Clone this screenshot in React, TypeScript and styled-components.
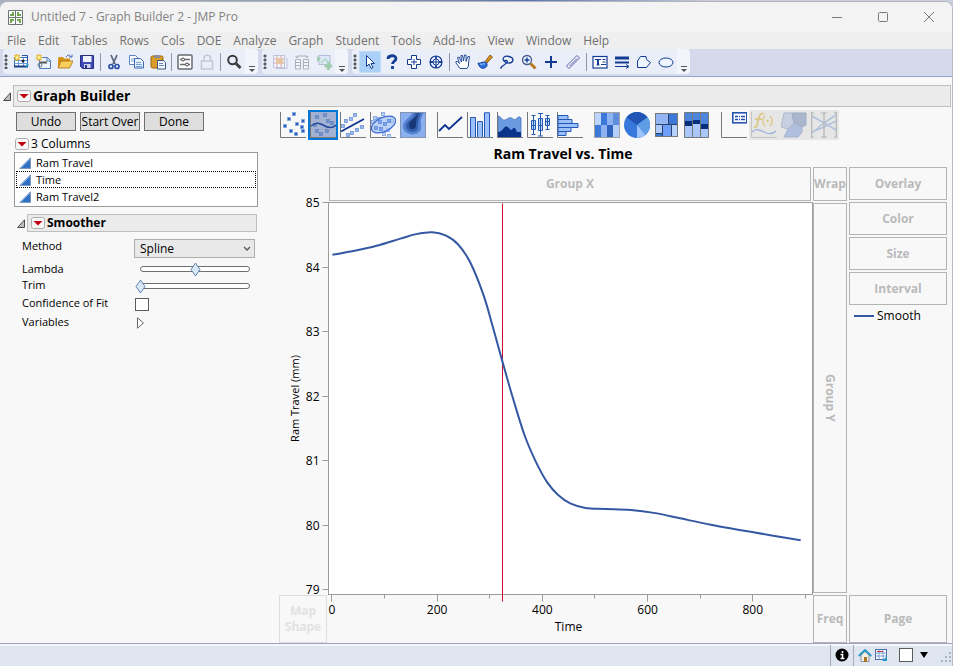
import React, { useLayoutEffect, useRef, useState } from "react";
import styled, { createGlobalStyle, css } from "styled-components";

const GlobalStyle = createGlobalStyle`
  * { box-sizing: border-box; }
  html, body { margin: 0; padding: 0; }
  body {
    background: #cdd3e4;
    color: #000;
    font: 12px/16px "Open Sans", "Noto Sans", sans-serif;
  }
  button, input, select { font: inherit; color: inherit; margin: 0; }
  svg { display: block; flex: none; }
`;

/* ---------- window frame ---------- */

const Page = styled.div`
  height: 100vh;
  min-height: 560px;
  display: flex;
  flex-direction: column;
  padding-top: 1px;
  background: linear-gradient(90deg, #aab2c4, #8d97b5 40%, #5873b4 55%, #c9cede 75%);
`;

const Window = styled.div`
  flex: 1;
  min-height: 0;
  display: flex;
  flex-direction: column;
  border-top: 1px solid #b4b4b6;
  border-right: 1px solid #b9bbc4;
  border-radius: 8px 8px 0 0;
  background: #f8f8f8;
  overflow: hidden;
`;

const TitleBar = styled.header`
  display: flex;
  align-items: center;
  gap: 8px;
  height: 30px;
  padding-left: 8px;
  background: #f3f3f3;
  color: #828282;
`;

const WindowTitle = styled.h1`
  flex: 1;
  margin: 0;
  font-size: 12px;
  font-weight: 400;
`;

const CaptionButtons = styled.div`
  display: flex;
`;

const CaptionButton = styled.button`
  display: grid;
  place-items: center;
  width: 46px;
  height: 28px;
  padding: 0;
  border: 0;
  background: none;
`;

const MenuBar = styled.nav`
  display: flex;
  gap: 12px;
  height: 17px;
  padding-left: 7px;
  background: #efefef;
`;

const MenuItem = styled.button`
  padding: 0;
  border: 0;
  background: none;
  color: #707070;
  line-height: 17px;
`;

/* ---------- toolbar ---------- */

const ToolStrip = styled.div`
  display: flex;
  gap: 4px;
  height: 28px;
  padding: 0 0 2px 3px;
  background: #d4d9ec;
  border-bottom: 1px solid #97a3ce;
`;

const ToolGroup = styled.div`
  display: flex;
  align-items: center;
  border-radius: 4px;
  background: #eaeef9;
`;

const Grip = styled.span`
  width: 7px;
  height: 15px;
  background: radial-gradient(circle at 3px 2px, #55585f 1px, transparent 2px) 0 0 / 7px 4px;
`;

const ToolButton = styled.button<{ $active?: boolean; $dim?: boolean }>`
  display: grid;
  place-items: center;
  width: 22px;
  height: 22px;
  padding: 0;
  border: 1px solid ${(p) => (p.$active ? "#c3dcf6" : "transparent")};
  background: ${(p) => (p.$active ? "#acd1f8" : "none")};
  & > svg { opacity: ${(p) => (p.$dim ? 0.4 : 1)}; }
`;

const ToolDivider = styled.span`
  width: 1px;
  height: 18px;
  margin: 0 2px;
  background: #8f95aa;
`;

const Overflow = styled.button`
  align-self: stretch;
  display: flex;
  align-items: flex-end;
  justify-content: center;
  width: 13px;
  padding: 0 0 2px;
  border: 0;
  border-radius: 0 4px 4px 0;
  background: #f3f5fc;
`;

/* ---------- outline headings ---------- */

const Outline = styled.div<{ $small?: boolean }>`
  display: flex;
  align-items: center;
  gap: 2px;
  padding: ${(p) => (p.$small ? "0 1px 0 3px" : "0 1px 0 3px")};
`;

const OutlineBar = styled.div<{ $small?: boolean }>`
  flex: 1;
  display: flex;
  align-items: center;
  gap: 2px;
  height: ${(p) => (p.$small ? "18px" : "22px")};
  padding-left: 3px;
  border: 1px solid #bebebe;
  background: #ebebeb;
`;

const OutlineTitle = styled.h2<{ $small?: boolean }>`
  margin: 0;
  font-size: ${(p) => (p.$small ? "12px" : "14px")};
  line-height: 16px;
  font-weight: 700;
`;

const PlainButton = styled.button`
  display: block;
  padding: 0;
  border: 0;
  background: none;
`;

/* ---------- body layout ---------- */

const Content = styled.main`
  flex: 1;
  min-height: 0;
  display: flex;
  flex-direction: column;
  padding-top: 8px;
`;

const Workspace = styled.div`
  flex: 1;
  min-height: 0;
  display: grid;
  grid-template-columns: 244px minmax(0, 1fr);
  gap: 20px;
  padding: 3px 5px 0 14px;
`;

const ControlPanel = styled.section`
  display: flex;
  flex-direction: column;
  padding-top: 2px;
`;

const ButtonRow = styled.div`
  display: flex;
  gap: 4px;
  padding-left: 2px;
`;

const PushButton = styled.button`
  width: 60px;
  height: 19px;
  padding: 0;
  border: 1px solid #707070;
  background: #dedede;
  line-height: 16px;
  white-space: nowrap;
`;

const ColumnsHeading = styled.div`
  display: flex;
  align-items: center;
  gap: 2px;
  height: 16px;
  margin: 5px 0 0 1px;
`;

const ColumnList = styled.ul`
  margin: 0 0 7px;
  padding: 1px;
  border: 1px solid #9a9a9a;
  background: #fff;
  font-size: 11px;
  list-style: none;
`;

const ColumnItem = styled.li<{ $focused?: boolean }>`
  display: flex;
  align-items: center;
  gap: 5px;
  height: 17px;
  padding-left: 2px;
  border: 1px dotted ${(p) => (p.$focused ? "#000" : "transparent")};
`;

const Form = styled.div`
  display: grid;
  grid-template-columns: 112px 121px;
  grid-template-rows: 23px 16px 18px 19px 18px;
  align-items: center;
  padding: 6px 0 0 8px;
`;

const Label = styled.label`
  align-self: start;
  font-size: 11px;
  line-height: 16px;
`;

const SelectBox = styled.div`
  display: grid;
  align-items: center;
  align-self: start;
  margin-top: 1px;
  & > * { grid-area: 1 / 1; }
  & > svg { justify-self: end; margin-right: 4px; pointer-events: none; }
`;

const Select = styled.select`
  appearance: none;
  width: 100%;
  height: 19px;
  padding: 0 5px;
  border: 1px solid #adadad;
  border-radius: 0;
  background: #e9e9e9;
  line-height: 16px;
`;

const SliderBox = styled.div`
  display: grid;
  align-items: center;
  width: 120px;
  margin-left: 1px;
  & > * { grid-area: 1 / 1; }
`;

const Rail = styled.span`
  height: 6px;
  margin: 0 5px;
  border: 1px solid #6e6e6e;
  border-radius: 3px;
  background: #fff;
`;

const thumb = css`
  appearance: none;
  width: 11px;
  height: 15px;
  border: 0;
  border-radius: 0;
  background: url("data:image/svg+xml,%3Csvg xmlns='http://www.w3.org/2000/svg' width='11' height='15'%3E%3Cpath d='M5.5 1 10 7.500 5.500 14 1 7.500Z' fill='%23d9e8f6' stroke='%236284ab'/%3E%3C/svg%3E") no-repeat;
`;

const Range = styled.input.attrs({ type: "range" })`
  appearance: none;
  width: 100%;
  height: 15px;
  background: none;
  &::-webkit-slider-thumb { ${thumb} }
  &::-moz-range-thumb { ${thumb} }
`;

const Checkbox = styled.input.attrs({ type: "checkbox" })`
  appearance: none;
  width: 14px;
  height: 13px;
  margin-left: 1px;
  border: 1px solid #5c5c5c;
  background: #fff;
  &:checked { background: #2c62b0; }
`;

/* ---------- graph area ---------- */

const GraphPanel = styled.section`
  display: flex;
  flex-direction: column;
  min-width: 0;
  min-height: 0;
`;

const ElementBar = styled.div`
  display: flex;
  gap: 7px;
`;

const ElementGroup = styled.div`
  display: flex;
`;

const DisabledElements = styled.div`
  display: flex;
  background: #e6e6e6;
`;

const ElementButton = styled.button<{ $selected?: boolean }>`
  display: grid;
  place-items: center;
  width: 30px;
  height: 30px;
  padding: 0;
  border: 2px solid ${(p) => (p.$selected ? "#0078d7" : "transparent")};
  background: ${(p) => (p.$selected ? "#a3b1d2" : "none")};
`;

const GraphGrid = styled.div`
  flex: 1;
  min-height: 0;
  display: grid;
  grid-template-columns: 48px minmax(0, 1fr) 34px 98px;
  grid-template-rows: 27px 34px minmax(0, 1fr) 48px;
  column-gap: 2px;
  padding-left: 1px;
`;

const GraphTitle = styled.h3`
  grid-area: 1 / 1 / 2 / 4;
  align-self: center;
  margin: 0;
  text-align: center;
  font-size: 14px;
  line-height: 20px;
  font-weight: 700;
`;

const DropZone = styled.div<{ $area?: string; $faint?: boolean; $vertical?: boolean; $inset?: boolean }>`
  grid-area: ${(p) => p.$area ?? "auto"};
  display: flex;
  align-items: center;
  justify-content: center;
  min-height: 33px;
  margin: ${(p) => (p.$inset ? "2px 0" : "0")};
  border: 1px solid ${(p) => (p.$faint ? "#dedede" : "#b4b4b4")};
  background: #f8f8f8;
  color: ${(p) => (p.$faint ? "#e2e2e2" : "#bababa")};
  font-weight: 700;
  text-align: center;
  writing-mode: ${(p) => (p.$vertical ? "vertical-rl" : "horizontal-tb")};
`;

const RoleColumn = styled.div`
  grid-area: 2 / 4 / 4 / 5;
  display: flex;
  flex-direction: column;
  gap: 2px;
`;

const LegendEntry = styled.div`
  display: flex;
  align-items: center;
  gap: 3px;
  padding: 1px 0 0 5px;
`;

const LegendSwatch = styled.span`
  width: 20px;
  height: 2px;
  background: #3558a2;
`;

const ChartSvg = styled.svg`
  grid-area: 3 / 1 / 5 / 3;
  width: 100%;
  height: calc(100% - 2px);
  margin-top: 2px;
  overflow: visible;
  font-size: 12px;
`;

const AxisTitle = styled.text`
  font-size: 11px;
`;

/* ---------- status bar ---------- */

const StatusBar = styled.footer`
  display: flex;
  justify-content: flex-end;
  align-items: center;
  height: 23px;
  border-top: 1px solid #97a3ce;
  box-shadow: inset 0 2px #f4f6fb;
  background: #e0e6f0;
`;

const StatusCell = styled.div`
  display: flex;
  align-items: center;
  gap: 3px;
  height: 21px;
  padding: 0 4px;
  border-left: 1px solid #a4aabb;
`;

const StatusCheck = styled(Checkbox)`
  height: 14px;
  margin: 0 4px 0 9px;
`;

/* ---------- small glyphs ---------- */

const Disclosure = () => (
  <svg width="8" height="9" viewBox="0 0 8 9"><path d="M7.500 .8V8.500H.6Z" fill="#bdbdbd" stroke="#4a4a4a" /></svg>
);

const RedTriangle = () => (
  <svg width="14" height="12" viewBox="0 0 14 12">
    <rect x=".5" y=".5" width="13" height="11" rx="2" fill="#f7f7f7" stroke="#adadad" />
    <path d="M2.500 4h9L7 8.500Z" fill="#c00010" />
  </svg>
);

const Continuous = () => (
  <svg width="12" height="12" viewBox="0 0 12 12">
    <path d="M.8 11.500 11.500 .8V11.500Z" fill="#2f6fc4" stroke="#7c97bd" />
    <path d="M2 11 11 2" stroke="#86aee6" />
  </svg>
);

/* ---------- toolbar icons ---------- */

const N = "#123c94";
const sun = <g stroke="#e3b21c" strokeWidth="1.200"><path d="M4 0v7M.5 3.500h7M1.500 1l5 5M6.500 1l-5 5" /><circle cx="4" cy="3.500" r="1.500" fill="#fff3a0" stroke="none" /></g>;

const toolArt: Record<string, React.ReactNode> = {
  newTable: <><rect x="1.500" y="3.500" width="13" height="9" fill="#fff" stroke="#3a6fc0" /><path d="M1.500 6.500h13M1.500 9.500h13M5.500 3.500v9M10.500 3.500v9" stroke="#6b9be0" /><path d="M9 1.500h5.500V7" stroke="#2a4f96" fill="none" /><path d="M1 12.500h14" stroke="#173e86" strokeWidth="2" /><circle cx="10" cy="7" r="1.500" fill="#222" /><path d="m12 14 2-5 2 2Z" fill="#2fa0c8" />{sun}</>,
  newScript: <><path d="M4.500 3.500h8l3 3v8h-11z" fill="#eef4fd" stroke="#4d79b8" /><path d="M12 3.500v3.500h3" fill="none" stroke="#4d79b8" /><path d="M5 8.500h7" stroke="#555" strokeWidth="2" /><circle cx="5" cy="11" r="2" fill="none" stroke="#777" />{sun}</>,
  open: <><path d="M1 4.500 2 3h4l1 1.500h6V14H1z" fill="#d79018" /><path d="m1 14 3-7h12l-3.500 7z" fill="#f9cf5c" stroke="#a96d0c" strokeWidth=".8" /><path d="M9 3c2-3 4-2 5 0M12 3h3V.5" fill="none" stroke="#3e68a8" /></>,
  save: <><path d="M1.500 1.500h13v13h-11l-2-2z" fill="#3f49b4" stroke="#262f86" /><path d="M4 2h8.500v6H4z" fill="#eef2fc" /><path d="M5 10h6.500v4H5z" fill="#cfd5ee" /><path d="M6 11h2v3H6z" fill="#262f86" /></>,
  cut: <><path d="M5 1 9 10M11 1 7 10" stroke="#5b6a80" strokeWidth="1.800" /><circle cx="5" cy="12.500" r="2" fill="none" stroke="#2a4fa5" strokeWidth="1.700" /><circle cx="11" cy="12.500" r="2" fill="none" stroke="#2a4fa5" strokeWidth="1.700" /></>,
  copy: <><path d="M1.500 1.500h6l2 2V10.500h-8z" fill="#fff" stroke="#5a84c4" /><path d="M3 5h4M3 7h4" stroke="#77a0df" /><path d="M6.500 4.500h6l3 3v6.500h-9z" fill="#e7f0fd" stroke="#3b69b4" /><path d="M8 8.500h5M8 10.500h6M8 12.500h6" stroke="#77a0df" /></>,
  paste: <><rect x="1" y="2" width="12" height="12" rx="1.500" fill="#dc9c28" stroke="#9b6510" /><path d="M4 1h6v3H4z" fill="#8b8e98" /><path d="M7.500 6.500h6l2 2v6.500h-8z" fill="#f4f8ff" stroke="#41577f" /><path d="M9 9.500h4M9 11.500h5" stroke="#6a87b8" /></>,
  prefs: <><rect x="1" y="1" width="14" height="14" rx="1" fill="#fff" stroke="#666b73" strokeWidth="1.500" /><path d="M3 5.500h10M3 10.500h10" stroke="#666b73" strokeWidth="1.300" /><circle cx="6" cy="5.500" r="1.500" fill="#fff" stroke="#444" /><circle cx="10" cy="10.500" r="1.500" fill="#fff" stroke="#444" /></>,
  lock: <g fill="none" stroke="#c3c7d1" strokeWidth="1.500"><rect x="2.500" y="7" width="11" height="8" /><path d="M5 7V4.500a3.200 3.200 0 0 1 6.500 0V7" /></g>,
  search: <><circle cx="6.500" cy="6" r="4.300" fill="none" stroke="#3b3b3e" strokeWidth="2" /><path d="m10 9.500 4.500 4.500" stroke="#3b3b3e" strokeWidth="2.800" /></>,
  tableRun: <><rect x="1.500" y="1.500" width="11" height="12" fill="#fff" stroke="#7d8fb5" /><path d="M1.500 5h11M1.500 9h11M5 1.500v12M9 1.500v12" stroke="#c34545" /><rect x="4" y="4" width="7" height="6" fill="#d98f2a" /><path d="M4 14.500h11V4" stroke="#8190b0" fill="none" /></>,
  columns: <><path d="M1.500 5.500h5v9.500h-5zM9.500 5.500h5v9.500h-5z" fill="#fff" stroke="#555" /><path d="M1.500 8.500h5M1.500 11.500h5M9.500 8.500h5M9.500 11.500h5" stroke="#555" /><path d="M3 3.500V2h10v1.500M1.500 2.500 3 4l1.500-1.500M11.500 2.500 13 4l1.500-1.500" fill="none" stroke="#555" /></>,
  addData: <><rect x="3" y="1.500" width="11" height="9" fill="#cfe0f5" stroke="#5a77aa" /><path d="m1 2 4 3-4 3z" fill="#3b9a3b" /><path d="m5 9 4-4 4 4" fill="none" stroke="#4b7" strokeWidth="1.500" /><path d="M12.500 8v8M8.500 12h8" stroke="#2f9b39" strokeWidth="3" /></>,
  arrow: <path d="M4.500 1.500v11l2.500-2.500 2 4.500 2-1-2-4h3.500z" fill="#fff" stroke={N} />,
  help: <path d="M4 5c0-4 8-4.500 8-.5 0 2.500-3.500 3-3.500 5.500M8.500 12v3" fill="none" stroke={N} strokeWidth="2.800" />,
  cross: <path d="M5.500 1.500h5v4h4v5h-4v4h-5v-4h-4v-5h4zM8 5v6M5 8h6" fill="#fff" stroke={N} />,
  globe: <><circle cx="8" cy="8" r="6" fill="#eef3ff" stroke={N} strokeWidth="1.200" /><path d="M8 2v3.500M8 10.500V14M2 8h3.500M10.500 8H14" stroke={N} strokeWidth="1.800" /><circle cx="8" cy="8" r="3" fill="#fff" stroke={N} /><path d="M8 6v4M6 8h4" stroke={N} /></>,
  hand: <path d="M5 14.500 1 9V7.500h1.500l2 2L2.500 3.500 4 3l2.500 5L6 1.500h1.500L8.500 7 9.500 1H11v6.500L13 2.500h1.500L13.500 9v3L12 14.500z" fill="#fff" stroke={N} strokeWidth=".9" />,
  brush: <><path d="m8.500 7 4.500-6 2.500 2-5.500 6z" fill="#d9901c" stroke="#6e4a10" strokeWidth=".8" /><path d="M1 9c2 1 3-1 6-1 4 0 4 5 .5 6C4 15 2 13 1 9z" fill="#2b6fdc" stroke={N} /><path d="M3 10c2 1 4-1 5 0" stroke="#a9cbfb" fill="none" /></>,
  lasso: <path d="M6 8C1.500 4 6 1.500 10 2.500c6 1.500 4.500 7-1 6.500-4-.5-4-3-1.500-2.500 2.500 1-1.500 4-4.500 6L1.500 14.500" fill="none" stroke={N} strokeWidth="1.300" />,
  zoom: <><circle cx="6" cy="6" r="4.500" fill="#eef5ff" stroke="#43598b" strokeWidth="1.300" /><path d="M6 3.500v5M3.500 6h5" stroke={N} strokeWidth="1.400" /><path d="m9.500 9.500 5 5" stroke="#b5781c" strokeWidth="2.800" /></>,
  plus: <path d="M8 2v12M2 8h12" stroke={N} strokeWidth="2" />,
  ruler: <path d="m1.500 12 10.500-10.500L14.500 4 4 14.500zM4.500 12 12 4.500" fill="#f4f5fc" stroke="#5462a4" />,
  text: <><rect x="1" y="2.500" width="14" height="11.500" fill="#fff" stroke={N} strokeWidth="1.200" /><path d="M3 5.500h6M4.500 11h3M10.500 5.500h3M10.500 8h3M9 10.500h5" stroke={N} /><path d="M6 5v6" stroke={N} strokeWidth="2" /></>,
  line: <><path d="M1 4h14" stroke={N} strokeWidth="3" /><path d="M1 8.500h14" stroke={N} strokeWidth="2" /><path d="M1 12.500h13M12 10.500l3 2-3 2" stroke={N} fill="none" /></>,
  polygon: <path d="M1.500 7 4.500 2.500h5.500l.5 3 4 3-4 5h-9z" fill="#eef5ff" stroke={N} />,
  ellipse: <ellipse cx="8" cy="8.500" rx="7" ry="4.500" fill="#eef5ff" stroke={N} />,
};

const ToolIcon = ({ name }: { name: string }) => (
  <svg width="16" height="16" viewBox="0 0 16 16" fill="none">{toolArt[name]}</svg>
);

type Tool = { id: string; label: string; active?: boolean; dim?: boolean } | "divider";

const toolGroups: Tool[][] = [
  [
    { id: "newTable", label: "New data table" }, { id: "newScript", label: "New script" },
    { id: "open", label: "Open" }, { id: "save", label: "Save" }, "divider",
    { id: "cut", label: "Cut" }, { id: "copy", label: "Copy" }, { id: "paste", label: "Paste" }, "divider",
    { id: "prefs", label: "Preferences" }, { id: "lock", label: "Lock" }, "divider",
    { id: "search", label: "Search" },
  ],
  [
    { id: "tableRun", label: "Data table", dim: true }, { id: "columns", label: "Columns", dim: true },
    { id: "addData", label: "Add data", dim: true },
  ],
  [
    { id: "arrow", label: "Arrow", active: true }, { id: "help", label: "Help tool" },
    { id: "cross", label: "Selection" }, { id: "globe", label: "Scroller" }, "divider",
    { id: "hand", label: "Grabber" }, { id: "brush", label: "Brush" }, { id: "lasso", label: "Lasso" },
    { id: "zoom", label: "Magnifier" }, { id: "plus", label: "Crosshairs" }, { id: "ruler", label: "Ruler" }, "divider",
    { id: "text", label: "Annotate" }, { id: "line", label: "Line" }, { id: "polygon", label: "Polygon" },
    { id: "ellipse", label: "Oval" },
  ],
];

/* ---------- graph element icons ---------- */

const axes = <path d="M.5 0v25.500H26" fill="none" stroke="#777" />;
const dots = (points: number[][], fill = "#2a5db4", edge = "#7fa6e6") =>
  points.map(([x, y]) => <rect key={`${x}-${y}`} x={x - 0.5} y={y - 0.5} width="3" height="3" fill={fill} stroke={edge} strokeWidth=".8" />);
const scatter = [[13, 1], [8, 6], [22, 8], [16, 11], [4, 13], [21, 14], [10, 18], [15, 21], [22, 18]];

const elementArt: Record<string, React.ReactNode> = {
  Points: <>{axes}{dots(scatter)}</>,
  Smoother: <>{axes}{dots([[14, 2], [6, 4], [17, 8], [21, 10], [4, 12], [6, 18], [16, 18], [10, 21]], "#7291cd", "#6885c0")}<path d="M1 14c4-3 7-4 12-1s9 4 13 0" fill="none" stroke="#24479a" strokeWidth="1.500" /></>,
  "Line of Fit": <>{axes}{dots([[14, 2], [10, 6], [5, 8], [2, 13], [21, 14], [16, 17], [11, 20], [7, 22]], "#9ab8ee", "#6f94d8")}<path d="M1 19.500 24 7" stroke="#0c3391" strokeWidth="1.700" /></>,
  Ellipse: <>{axes}{dots([[12, 1], [4, 5], [8, 6], [21, 8], [17, 17], [2, 9], [13, 21], [18, 23]], "#bcd1f6", "#7d9fe0")}<ellipse cx="13.500" cy="12.500" rx="13" ry="7" transform="rotate(-25 13.500 12.500)" fill="#a9c5f6" fillOpacity=".75" stroke="#3a6ad0" strokeWidth="1.200" />{dots([[9, 9], [14, 11], [18, 8], [5, 15], [10, 16]], "#7fa3e8", "#5f8de0")}</>,
  Contour: <><rect width="26" height="26" fill="#8ab0f0" /><path d="M12 0c1 4-10 8-9 15 1 9 16 10 18 2 1-6-1-7 0-10 1-3 2-4 3-7z" fill="#5582d0" /><path d="M15 0c0 7-9 8-9 14 0 7 11 8 12 2 0-6 1-11 4-16z" fill="#3360ae" /><path d="M18 0c-1 6-8 8-9 12-1 6 6 7 7 2 0-5 1-9 3-14z" fill="#173876" /><rect x=".5" y=".5" width="25" height="25" fill="none" stroke="#8494b5" /></>,
  Line: <>{axes}<path d="m2 19 6-6 4 4L25 5" fill="none" stroke="#0c3391" strokeWidth="1.800" /></>,
  Bar: <>{axes}<path d="M3.500 25V5.500h5V25M10.500 25V9.500h5V25M17.500 25V.8h5V25" fill="#9bc0fb" stroke="#2458b5" /></>,
  Area: <><path d="M1 4c3 0 4 5 7 4s5-4 8-1 5-5 8-1v19H1z" fill="#6a9ae0" stroke="#4975bc" strokeWidth=".8" /><path d="M1 20c3 0 4-2 6-4 3-4 5 1 7 2 2 0 2-3 4-2l2 4h4v5H1z" fill="#0b3389" />{axes}</>,
  "Box Plot": <>{axes}<g stroke="#2458b5" fill="#bed6ff"><path d="M6.500 3v20M4.500 3.500h4M4.500 22.500h4M4.500 8.500h4v9h-4zM4.500 13.500h4M13.500 1v23M11 1.500h5M11 24h5M11.500 6.500h4v12h-4zM11.500 13.500h4M20.500 3v15M18.500 3.500h4M18.500 17.500h4M18.500 6.500h4v7h-4zM18.500 9.500h4" /></g></>,
  Histogram: <>{axes}<path d="M1 3.500h10v4H1zM1 7.500h14v4H1zM1 11.500h20v4H1zM1 15.500h13v4H1zM1 19.500h8v4H1z" fill="#9bc0fb" stroke="#2458b5" /></>,
  Heatmap: <><path d="M0 0h26v26H0z" fill="#8fb3f2" /><path d="M0 0h7v13H0z" fill="#bcd5fe" /><path d="M7 0h6v13H7zM0 13h7v13H0z" fill="#3b78d8" /><path d="M19 0h7v13h-7z" fill="#5e8edb" /><path d="M13 13h6v13h-6z" fill="#2f63bd" /><path d="M19 13h7v13h-7z" fill="#b3cefc" /><rect x=".5" y=".5" width="25" height="25" fill="none" stroke="#a2a2a2" /></>,
  Pie: <><circle cx="13" cy="13" r="13" fill="#3877dc" /><path d="M13 13 2.500 5.300A13 13 0 0 1 23.500 5.300z" fill="#2156b4" /><path d="M13 13 23.500 5.300A13 13 0 0 1 21.500 23z" fill="#5f9ee6" /><path d="M13 13 21.500 23A13 13 0 0 1 13 26z" fill="#9dc2fc" /></>,
  Treemap: <><g stroke="#2c4168"><path d="M1.500 1.500h13v11h-13z" fill="#94b5f1" /><path d="M14.500 1.500h9v11h-9z" fill="#3b78d8" /><path d="M1.500 12.500h7v9h-7z" fill="#afcbfb" /><path d="M8.500 12.500h9v12h-9z" fill="#6d9ffa" /><path d="M17.500 12.500h6v12h-6z" fill="#b8d2ff" /><path d="M1.500 21.500h7v3h-7z" fill="#3b78d8" /></g><rect x="1.500" y="1.500" width="22" height="23" fill="none" stroke="#777" /></>,
  Mosaic: <><path d="M1 1h24v24H1z" fill="#a9c7fa" /><path d="M1 1h8v9H1zM9 1h8v8H9zM17 1h8v11h-8z" fill="#4b85dc" /><path d="M1 9h8v5H1zM9 8h8v4H9zM17 12h8v5h-8z" fill="#082e7b" /><path d="M.5 .5h8v25h-8zM8.500 .5h8v25h-8zM16.500 .5h8v25h-8z" fill="none" stroke="#777" /></>,
  "Caption Box": <>{axes}<rect x="11.800" y=".8" width="14" height="10" fill="#fff" stroke="#1d4bae" strokeWidth="1.500" /><path d="M14 4.500h3M18 4.500h1M20 4.500h4M14 7.500h3M18 7.500h1M20 7.500h4" stroke="#1d4bae" strokeWidth="1.300" /></>,
  Formula: <><path d="M.5 0v25.500H26" fill="none" stroke="#c4c4c4" /><path d="M3 15c3 1 3-2 4-6s2-9 6-7M4 7h7" fill="none" stroke="#dccb8e" strokeWidth="2" /><path d="M14 4c-3 3-3 7 0 10M19 4c3 3 3 7 0 10" fill="none" stroke="#dccb8e" strokeWidth="1.600" /><circle cx="16.500" cy="9" r="1.500" fill="#dccb8e" /><path d="M1 20c4-4 8-2 12 0s8 3 12-1" fill="none" stroke="#9eb3d8" strokeWidth="1.300" /></>,
  "Map Shapes": <><path d="M3 1h8l2 10-6 6-7-2z" fill="#c6d0e2" stroke="#adb8cb" /><path d="M11 1h14v12l-4 2-8-4z" fill="#a9b6cc" stroke="#a0adc3" /><path d="m7 17 6-6 8 4v5l-4 5H3z" fill="#afbfdd" stroke="#a5b4d0" /></>,
  Parallel: <><path d="m1 4 12 7L25 3M1 21l12-10 12 7M1 20l12-5 12-6" fill="none" stroke="#b3c1da" strokeWidth="1.600" /><path d="M.7 0v26M13 0v26M25.300 0v26M0 1h3M10 1h6M23 1h3M0 25h3M10 25h6M23 25h3" stroke="#b5b5b5" strokeWidth="1.200" fill="none" /></>,
};

const elementGroups = [
  ["Points", "Smoother", "Line of Fit", "Ellipse", "Contour"],
  ["Line", "Bar", "Area", "Box Plot", "Histogram"],
  ["Heatmap", "Pie", "Treemap", "Mosaic"],
];

const GraphElement = ({ name, selected, disabled }: { name: string; selected?: boolean; disabled?: boolean }) => (
  <ElementButton aria-label={name} aria-pressed={!!selected} $selected={selected} disabled={disabled}>
    <svg width="26" height="26" viewBox="0 0 26 26">{elementArt[name]}</svg>
  </ElementButton>
);

/* ---------- chart ---------- */

const smooth: [number, number][] = [
  [1, 84.19], [35, 84.24], [85, 84.33], [130, 84.44], [160, 84.51], [191, 84.54], [216, 84.49], [240, 84.35],
  [263, 84.07], [288, 83.57], [305, 83.1], [324, 82.54], [343, 82.0], [366, 81.4], [388, 80.98], [409, 80.67],
  [430, 80.47], [453, 80.34], [482, 80.27], [520, 80.255], [568, 80.24], [615, 80.19], [662, 80.11],
  [720, 80.01], [796, 79.9], [891, 79.77],
];

function curve(points: number[][]) {
  let d = `M${points[0][0]} ${points[0][1]}`;
  for (let i = 0; i < points.length - 1; i++) {
    const a = points[Math.max(i - 1, 0)], b = points[i], c = points[i + 1], e = points[Math.min(i + 2, points.length - 1)];
    d += `C${b[0] + (c[0] - a[0]) / 6} ${b[1] + (c[1] - a[1]) / 6} ${c[0] - (e[0] - b[0]) / 6} ${c[1] - (e[1] - b[1]) / 6} ${c[0]} ${c[1]}`;
  }
  return d;
}

const AXIS = "#9c9c9c";

function Chart() {
  const ref = useRef<SVGSVGElement>(null);
  const [size, setSize] = useState({ w: 532, h: 440 });
  useLayoutEffect(() => {
    const el = ref.current!;
    const measure = () => {
      const box = el.getBoundingClientRect();
      setSize({ w: Math.round(box.width), h: Math.round(box.height) });
    };
    measure();
    const observer = new ResizeObserver(measure);
    observer.observe(el);
    return () => observer.disconnect();
  }, []);

  const left = 49.5, top = -0.5, right = size.w + 1.5, bottom = size.h - 48.5;
  const x = (v: number) => left + ((v + 6.5) / 920) * (right - left);
  const y = (v: number) => top + ((85 - v) / 6.07) * (bottom - top);
  const snap = (v: number) => Math.floor(v) + 0.5;
  const marker = snap(x(324));
  return (
    <ChartSvg ref={ref} role="img" aria-label="Ram Travel vs. Time">
      <rect x={left} y={top} width={right - left} height={bottom - top} fill="#fff" stroke={AXIS} />
      {[79, 80, 81, 82, 83, 84, 85].map((v) => (
        <g key={v}>
          <path d={`M${left - 6} ${snap(y(v))}H${left}`} stroke={AXIS} />
          <text x={left - 9} y={snap(y(v)) + 4.5} textAnchor="end">{v}</text>
        </g>
      ))}
      {[0, 100, 200, 300, 400, 500, 600, 700, 800, 900].map((v) => (
        <g key={v}>
          <path d={`M${snap(x(v))} ${bottom}v${v % 200 ? 4 : 7}`} stroke={AXIS} />
          {v % 200 === 0 && <text x={x(v)} y={bottom + 19} textAnchor="middle">{v}</text>}
        </g>
      ))}
      <line x1={marker} x2={marker} y1={top + 1} y2={bottom + 7} stroke="#c8102e" />
      <path d={curve(smooth.map(([t, r]) => [x(t), y(r)]))} fill="none" stroke="#3558a2" strokeWidth="2" />
      <text x={(left + right) / 2 - 2} y={bottom + 36} textAnchor="middle">Time</text>
      <AxisTitle transform={`translate(20 ${(top + bottom) / 2}) rotate(-90)`} textAnchor="middle">Ram Travel (mm)</AxisTitle>
    </ChartSvg>
  );
}

/* ---------- app ---------- */

const menus = ["File", "Edit", "Tables", "Rows", "Cols", "DOE", "Analyze", "Graph", "Student", "Tools", "Add-Ins", "View", "Window", "Help"];

export default function App() {
  return (
    <>
      <GlobalStyle />
      <Page>
        <Window>
          <TitleBar>
            <svg width="15" height="15" viewBox="0 0 15 15">
              <path d="M.5 .5h14v14H.5zM7.500 .5v14M.5 7.500h14" fill="#fff" stroke="#6f7671" />
              <path d="M2 4h2V2h2v4H2zM9 2h2v2h2v2H9zM2 9h4v2H4v2H2zM9 9h4v4h-2v-2H9z" fill="#72a64e" />
            </svg>
            <WindowTitle>Untitled 7 - Graph Builder 2 - JMP Pro</WindowTitle>
            <CaptionButtons>
              <CaptionButton aria-label="Minimize"><svg width="10" height="10"><path d="M0 5.500h10" stroke="#7a7a7a" /></svg></CaptionButton>
              <CaptionButton aria-label="Maximize"><svg width="10" height="10"><rect x=".5" y=".5" width="9" height="9" rx="1" fill="none" stroke="#7a7a7a" /></svg></CaptionButton>
              <CaptionButton aria-label="Close"><svg width="10" height="10"><path d="m0 0 10 10M10 0 0 10" stroke="#7a7a7a" /></svg></CaptionButton>
            </CaptionButtons>
          </TitleBar>
          <MenuBar>{menus.map((m) => <MenuItem key={m}>{m}</MenuItem>)}</MenuBar>
          <ToolStrip>
            {toolGroups.map((group, g) => (
              <ToolGroup key={g}>
                <Grip />
                {group.map((tool, i) =>
                  tool === "divider" ? <ToolDivider key={i} /> : (
                    <ToolButton key={tool.id} aria-label={tool.label} $active={tool.active} $dim={tool.dim}><ToolIcon name={tool.id} /></ToolButton>
                  ))}
                <Overflow aria-label="More tools"><svg width="6" height="6"><path d="M0 .5h6" stroke="#555" /><path d="M0 3h6L3 6z" fill="#555" /></svg></Overflow>
              </ToolGroup>
            ))}
          </ToolStrip>
          <Content>
            <Outline>
              <PlainButton aria-label="Collapse Graph Builder"><Disclosure /></PlainButton>
              <OutlineBar>
                <PlainButton aria-label="Graph Builder options"><RedTriangle /></PlainButton>
                <OutlineTitle>Graph Builder</OutlineTitle>
              </OutlineBar>
            </Outline>
            <Workspace>
              <ControlPanel>
                <ButtonRow>
                  <PushButton>Undo</PushButton>
                  <PushButton>Start Over</PushButton>
                  <PushButton>Done</PushButton>
                </ButtonRow>
                <ColumnsHeading>
                  <PlainButton aria-label="Column options"><RedTriangle /></PlainButton>
                  <span>3 Columns</span>
                </ColumnsHeading>
                <ColumnList>
                  <ColumnItem><Continuous />Ram Travel</ColumnItem>
                  <ColumnItem $focused><Continuous />Time</ColumnItem>
                  <ColumnItem><Continuous />Ram Travel2</ColumnItem>
                </ColumnList>
                <Outline $small>
                  <PlainButton aria-label="Collapse Smoother"><Disclosure /></PlainButton>
                  <OutlineBar $small>
                    <PlainButton aria-label="Smoother options"><RedTriangle /></PlainButton>
                    <OutlineTitle $small>Smoother</OutlineTitle>
                  </OutlineBar>
                </Outline>
                <Form>
                  <Label htmlFor="method">Method</Label>
                  <SelectBox>
                    <Select id="method" defaultValue="Spline"><option>Spline</option></Select>
                    <svg width="8" height="6"><path d="m1 1 3 3 3-3" fill="none" stroke="#555" strokeWidth="1.300" /></svg>
                  </SelectBox>
                  <Label htmlFor="lambda">Lambda</Label>
                  <SliderBox><Rail /><Range id="lambda" defaultValue={50} /></SliderBox>
                  <Label htmlFor="trim">Trim</Label>
                  <SliderBox><Rail /><Range id="trim" defaultValue={0} /></SliderBox>
                  <Label htmlFor="fit">Confidence of Fit</Label>
                  <Checkbox id="fit" />
                  <Label as="span">Variables</Label>
                  <PlainButton aria-label="Expand Variables"><svg width="14" height="12"><path d="M3.500 .8v10.400L9.500 6z" fill="#fff" stroke="#666" /></svg></PlainButton>
                </Form>
              </ControlPanel>
              <GraphPanel>
                <ElementBar>
                  {elementGroups.map((group, g) => (
                    <ElementGroup key={g}>{group.map((n) => <GraphElement key={n} name={n} selected={n === "Smoother"} />)}</ElementGroup>
                  ))}
                  <ElementGroup>
                    <GraphElement name="Caption Box" />
                    <DisabledElements>
                      <GraphElement name="Formula" disabled />
                      <GraphElement name="Map Shapes" disabled />
                      <GraphElement name="Parallel" disabled />
                    </DisabledElements>
                  </ElementGroup>
                </ElementBar>
                <GraphGrid>
                  <GraphTitle>Ram Travel vs. Time</GraphTitle>
                  <DropZone $area="2 / 2 / 3 / 3">Group X</DropZone>
                  <DropZone $area="2 / 3 / 3 / 4">Wrap</DropZone>
                  <RoleColumn>
                    <DropZone>Overlay</DropZone>
                    <DropZone>Color</DropZone>
                    <DropZone>Size</DropZone>
                    <DropZone>Interval</DropZone>
                    <LegendEntry><LegendSwatch />Smooth</LegendEntry>
                  </RoleColumn>
                  <Chart />
                  <DropZone $area="3 / 3 / 4 / 4" $vertical $inset>Group Y</DropZone>
                  <DropZone $area="4 / 1 / 5 / 2" $faint>Map<br />Shape</DropZone>
                  <DropZone $area="4 / 3 / 5 / 4">Freq</DropZone>
                  <DropZone $area="4 / 4 / 5 / 5">Page</DropZone>
                </GraphGrid>
              </GraphPanel>
            </Workspace>
          </Content>
          <StatusBar>
            <StatusCell>
              <svg width="14" height="14" viewBox="0 0 14 14"><circle cx="7" cy="7" r="6.500" fill="#000" /><path d="M7.500 3v2M5.500 6.500h2V10M5.500 10.500h4" fill="none" stroke="#fff" strokeWidth="1.600" /></svg>
            </StatusCell>
            <StatusCell>
              <svg width="14" height="13" viewBox="0 0 14 13"><path d="M3 6v6.500h8V6L7 2.500z" fill="#f3efe4" stroke="#8c97a3" /><path d="M.8 7 7 1l6.200 6" fill="none" stroke="#2496c4" strokeWidth="1.800" /><path d="M6 8h3v5H6z" fill="#a97724" /></svg>
              <svg width="12" height="12" viewBox="0 0 12 12"><rect x=".5" y=".5" width="11" height="10" fill="#fff" stroke="#456ca8" /><path d="M.5 4h11M.5 7h11M4 .5v10M8 .5v10" stroke="#7d9fd2" /><path d="M2 2.500h6" stroke="#c03838" /><path d="m7 12 5-5v5z" fill="#2496c4" /></svg>
              <StatusCheck aria-label="Status" />
              <svg width="8" height="6"><path d="M0 0h8L4 6z" fill="#000" /></svg>
            </StatusCell>
            <svg width="20" height="22"><path d="M17 9h2M17 13h2M17 17h2M13 13h2M13 17h2M9 17h2" stroke="#aab2c4" strokeWidth="2" /></svg>
          </StatusBar>
        </Window>
      </Page>
    </>
  );
}
